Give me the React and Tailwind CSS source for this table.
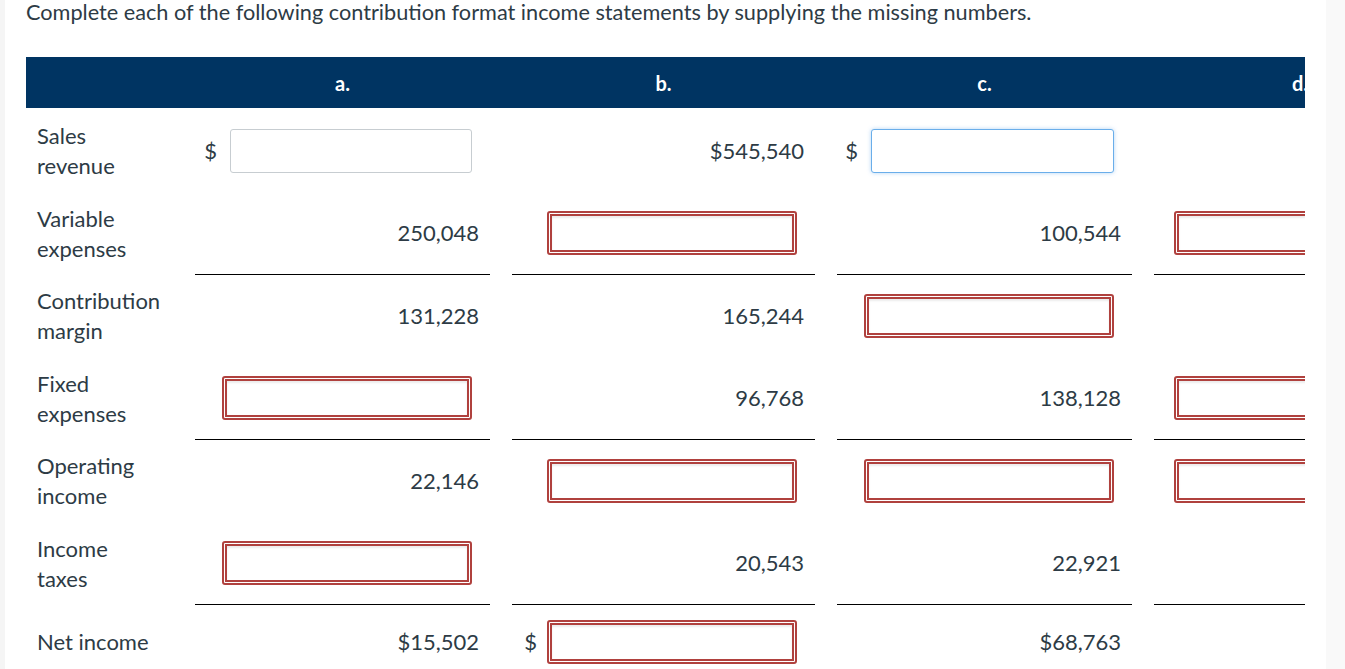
const rows = [
  { label: ['Sales', 'revenue'], line: false, cells: [{ t: 'plain', dollar: true }, { t: 'text', v: '$545,540' }, { t: 'focus', dollar: true }, null] },
  { label: ['Variable', 'expenses'], line: true, cells: [{ t: 'text', v: '250,048' }, { t: 'red' }, { t: 'text', v: '100,544' }, { t: 'red' }] },
  { label: ['Contribution', 'margin'], line: false, cells: [{ t: 'text', v: '131,228' }, { t: 'text', v: '165,244' }, { t: 'red' }, null] },
  { label: ['Fixed', 'expenses'], line: true, cells: [{ t: 'red' }, { t: 'text', v: '96,768' }, { t: 'text', v: '138,128' }, { t: 'red' }] },
  { label: ['Operating', 'income'], line: false, cells: [{ t: 'text', v: '22,146' }, { t: 'red' }, { t: 'red' }, { t: 'red' }] },
  { label: ['Income', 'taxes'], line: true, cells: [{ t: 'red' }, { t: 'text', v: '20,543' }, { t: 'text', v: '22,921' }, null] },
  { label: ['Net income'], line: false, last: true, cells: [{ t: 'text', v: '$15,502' }, { t: 'red', dollar: true }, { t: 'text', v: '$68,763' }, null] },
];

const grid = 'grid grid-cols-[158px_317px_325px_317px_310px]';

function Cell({ c, line }) {
  let body = null;
  if (c) {
    if (c.t === 'text') {
      body = <span className="pr-[11px]">{c.v}</span>;
    } else {
      const box =
        c.t === 'plain'
          ? 'w-[242px] h-[44px] border border-[#c7cdd1] rounded-[3px] bg-white'
          : c.t === 'focus'
          ? 'w-[243px] h-[44px] border border-[#6aaeea] rounded-[3px] bg-white shadow-[0_0_4px_rgba(90,165,230,0.45)]'
          : 'w-[250px] h-[44px] border-[5px] border-double border-[#b0413e] rounded-[3px] bg-white shadow-[inset_0_2px_2px_rgba(0,0,0,0.08)]';
      body = (
        <div className="flex items-center mr-[18px]">
          {c.dollar && <span className={c.t === 'red' ? 'mr-[10px]' : 'mr-[13px]'}>$</span>}
          <div className={box} />
        </div>
      );
    }
  }
  return (
    <div className="px-[11px] h-full">
      <div className={`h-full flex items-center justify-end ${line ? 'border-b border-black' : ''}`}>{body}</div>
    </div>
  );
}

export default function App() {
  return (
    <div className="w-[1345px] h-[669px] overflow-hidden flex bg-white text-[#2d3b45] font-['Lato',sans-serif] text-[22px] leading-[30px]">
      <div className="w-[5px] shrink-0 bg-[#f5f5f5]" />
      <div className="w-[1321px] shrink-0 pl-[21px] pr-[21px]">
        <p className="text-[21.7px] leading-[24px] whitespace-nowrap">
          Complete each of the following contribution format income statements by supplying the missing numbers.
        </p>
        <div className="mt-[33px] w-[1279px] overflow-hidden">
          <div className="w-[1427px]">
            <div className={`${grid} h-[51px] bg-[#003462] text-white font-bold text-[20px] items-center`}>
              <div />
              <div className="text-center">a.</div>
              <div className="text-center">b.</div>
              <div className="text-center">c.</div>
              <div className="text-center pl-[4px]">d.</div>
            </div>
            <div className="pt-[2px]">
              {rows.map((r, i) => (
                <div key={i} className={`${grid} ${r.last ? 'h-[73px]' : 'h-[82.5px]'}`}>
                  <div className="pl-[11px] flex flex-col justify-center">
                    {r.label.map((l) => (
                      <span key={l}>{l}</span>
                    ))}
                  </div>
                  {r.cells.map((c, j) => (
                    <Cell key={j} c={c} line={r.line} />
                  ))}
                </div>
              ))}
            </div>
          </div>
        </div>
      </div>
      <div className="flex-1 bg-[#f9f9f9]" />
    </div>
  );
}
